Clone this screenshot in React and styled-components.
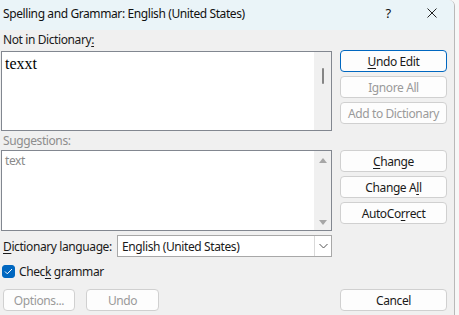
import React, { useState } from "react";
import styled, { createGlobalStyle } from "styled-components";

const GlobalStyle = createGlobalStyle`
  html, body { margin: 0; padding: 0; background: #f7f7f7; }
  body {
    font-family: "Noto Sans", "Open Sans", sans-serif;
    font-size: 12px;
    letter-spacing: -0.4px;
    color: #1a1a1a;
  }
  * { box-sizing: border-box; }
`;

const Window = styled.div`
  width: 455px;
  height: 315px;
  background: #f0f0f0;
  border-right: 1px solid #b9b9b9;
  border-top-right-radius: 6px;
  overflow: hidden;
  display: flex;
  flex-direction: column;
`;

const TitleBar = styled.div`
  height: 30px;
  background: #eaf4f8;
  display: flex;
  align-items: center;
  padding: 0 0 4px 3px;
  color: #111;
`;

const Title = styled.div`
  flex: 1;
`;

const TitleButton = styled.div`
  width: 44px;
  display: flex;
  justify-content: center;
  font-size: 13px;
`;

const Body = styled.div`
  flex: 1;
  display: flex;
  flex-direction: column;
  padding: 0 0 0 1px;
`;

const Main = styled.div`
  display: grid;
  grid-template-columns: 331px 107px;
  column-gap: 8px;
`;

const LeftCol = styled.div`
  display: flex;
  flex-direction: column;
`;

const RightCol = styled.div`
  display: flex;
  flex-direction: column;
  gap: 4px;
  padding-top: 20px;
`;

const Label = styled.div`
  height: ${p => p.$h}px;
  display: flex;
  align-items: center;
  padding: 0 0 ${p => p.$pb || 0}px 2px;
  color: ${p => p.$disabled ? "#8d8d8d" : "#1a1a1a"};
`;

const U = styled.span`
  text-decoration: underline;
  text-underline-offset: 2px;
`;

const ListBox = styled.div`
  height: ${p => p.$h}px;
  background: #fff;
  border: 1px solid #828790;
  display: flex;
`;

const ListText = styled.div`
  flex: 1;
  padding: ${p => p.$serif ? "2px 3px" : "3px 3px"};
  font-family: ${p => p.$serif ? '"Liberation Serif", serif' : "inherit"};
  font-size: ${p => p.$serif ? "16px" : "12px"};
  letter-spacing: ${p => p.$serif ? "0" : "-0.4px"};
  color: ${p => p.$muted ? "#8a8a8a" : "#000"};
  line-height: 1.2;
`;

const ScrollTrack = styled.div`
  width: 17px;
  background: #f0f0f0;
  display: flex;
  flex-direction: column;
  align-items: center;
  justify-content: ${p => p.$arrows ? "space-between" : "flex-start"};
  padding: ${p => p.$arrows ? "7px 0 5px" : "16px 0 0"};
`;

const Thumb = styled.div`
  width: 2px;
  height: 16px;
  background: #858585;
  border-radius: 1px;
`;

const Arrow = styled.div`
  width: 0;
  height: 0;
  border-left: 4px solid transparent;
  border-right: 4px solid transparent;
  ${p => p.$down ? "border-top: 5px solid #a6a6a6;" : "border-bottom: 5px solid #a6a6a6;"}
`;

const LangRow = styled.div`
  display: flex;
  align-items: center;
  margin-top: 4px;
  height: 22px;
`;

const LangLabel = styled.div`
  width: 116px;
  padding-left: 2px;
  white-space: nowrap;
`;

const Select = styled.div`
  flex: 1;
  height: 22px;
  background: #fff;
  border: 1px solid #a8a8a8;
  display: flex;
  align-items: center;
`;

const SelectValue = styled.div`
  flex: 1;
  padding-left: 4px;
`;

const SelectButton = styled.div`
  width: 17px;
  height: 100%;
  border-left: 1px solid #d9d9d9;
  display: flex;
  align-items: center;
  justify-content: center;
`;

const CheckRow = styled.div`
  display: flex;
  align-items: center;
  gap: 4px;
  height: 20px;
  margin-top: 4px;
  padding-left: 1px;
`;

const Box = styled.div`
  width: 13px;
  height: 13px;
  border-radius: 3px;
  background: ${p => p.$on ? "#0067c0" : "#fff"};
  border: 1px solid ${p => p.$on ? "#0067c0" : "#858585"};
  display: flex;
  align-items: center;
  justify-content: center;
  cursor: pointer;
`;

const Button = styled.div`
  height: 22px;
  width: ${p => p.$w || 107}px;
  background: #fdfdfd;
  border: 1px solid ${p => p.$primary ? "#0067c0" : "#d0d0d0"};
  border-radius: 4px;
  display: flex;
  align-items: center;
  justify-content: center;
  color: ${p => p.$disabled ? "#9a9a9a" : "#1a1a1a"};
`;

const Spacer = styled.div`
  height: ${p => p.$h}px;
`;

const BottomRow = styled.div`
  width: 446px;
  display: flex;
  align-items: center;
  margin-top: 8px;
  padding-left: 2px;
  gap: 11px;
`;

const Grow = styled.div`
  flex: 1;
`;

export default function App() {
  const [grammar, setGrammar] = useState(true);

  return (
    <>
      <GlobalStyle />
      <Window>
        <TitleBar>
          <Title>Spelling and Grammar: English (United States)</Title>
          <TitleButton>?</TitleButton>
          <TitleButton>
            <svg width="10" height="10" viewBox="0 0 10 10">
              <path d="M0.5 0.5 L9.5 9.5 M9.5 0.5 L0.5 9.5" stroke="#222" strokeWidth="1" />
            </svg>
          </TitleButton>
        </TitleBar>
        <Body>
          <Main>
            <LeftCol>
              <Label $h={21} $pb={2}>Not in Dictionary<U>:</U></Label>
              <ListBox $h={80}>
                <ListText $serif>texxt</ListText>
                <ScrollTrack><Thumb /></ScrollTrack>
              </ListBox>
              <Label $h={19} $disabled>Suggestions:</Label>
              <ListBox $h={81}>
                <ListText $muted>text</ListText>
                <ScrollTrack $arrows><Arrow /><Arrow $down /></ScrollTrack>
              </ListBox>
              <LangRow>
                <LangLabel><U>D</U>ictionary language:</LangLabel>
                <Select>
                  <SelectValue>English (United States)</SelectValue>
                  <SelectButton>
                    <svg width="9" height="6" viewBox="0 0 9 6">
                      <path d="M0.5 1 L4.5 5 L8.5 1" fill="none" stroke="#555" strokeWidth="1" />
                    </svg>
                  </SelectButton>
                </Select>
              </LangRow>
              <CheckRow>
                <Box $on={grammar} onClick={() => setGrammar(!grammar)}>
                  {grammar && (
                    <svg width="9" height="7" viewBox="0 0 9 7">
                      <path d="M1 3.5 L3.3 5.8 L8 1" fill="none" stroke="#fff" strokeWidth="1" />
                    </svg>
                  )}
                </Box>
                <span>Chec<U>k</U> grammar</span>
              </CheckRow>
            </LeftCol>
            <RightCol>
              <Button $primary><span><U>U</U>ndo Edit</span></Button>
              <Button $disabled>Ignore All</Button>
              <Button $disabled>Add to Dictionary</Button>
              <Spacer $h={18} />
              <Button><span><U>C</U>hange</span></Button>
              <Button><span>Change A<U>l</U>l</span></Button>
              <Button><span>AutoCo<U>r</U>rect</span></Button>
            </RightCol>
          </Main>
          <BottomRow>
            <Button $w={72} $disabled>Options...</Button>
            <Button $w={73} $disabled>Undo</Button>
            <Grow />
            <Button>Cancel</Button>
          </BottomRow>
        </Body>
      </Window>
    </>
  );
}
